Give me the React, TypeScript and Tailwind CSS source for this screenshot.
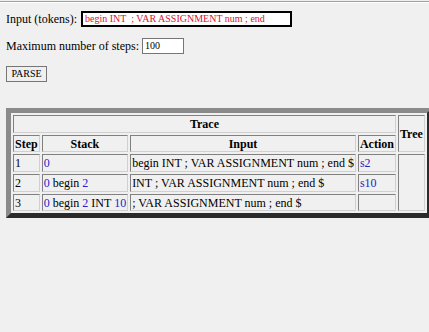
import React from "react";

const B = ({ children }: { children: React.ReactNode }) => (
  <span className="text-[#2323c8]">{children}</span>
);

export default function App() {
  const cell = "border border-[#808080] border-r-[#d0d0d0] border-b-[#d0d0d0] px-[1px] py-0 align-middle";
  const font = { fontFamily: '"Liberation Serif", "Times New Roman", serif' };
  return (
    <div
      className="w-[429px] h-[332px] bg-[#f0f0f0] text-black text-[12px] leading-[14px] overflow-hidden"
      style={font}
    >
      <div className="h-[1px] bg-[#a0a0a0] mt-[1px]" />
      <div className="h-[1px] bg-white" />
      <div className="px-[6px]">
        <div className="flex items-center mt-[8px] h-[16px]">
          <span>Input (tokens):</span>
          <div
            className="ml-[4px] w-[211px] h-[16px] border-2 border-black bg-white flex items-center px-[2px] text-[10px] text-[#e0102a] whitespace-pre"
            style={font}
          >
            begin INT  ; VAR ASSIGNMENT num ; end
          </div>
        </div>
        <div className="flex items-center mt-[11px] h-[16px]">
          <span>Maximum number of steps:</span>
          <div
            className="ml-[3px] w-[42px] h-[16px] border border-[#767676] bg-white flex items-center px-[2px] text-[10px]"
            style={font}
          >
            100
          </div>
        </div>
        <div
          className="mt-[12px] h-[16px] w-[41px] border border-[#767676] bg-[#efefef] flex items-center justify-center text-[10px]"
          style={font}
        >
          PARSE
        </div>
        <table
          className="mt-[26px] w-[418px] border-[5px] border-t-[#8a8a8a] border-l-[#8a8a8a] border-r-[#2a2a2a] border-b-[#2a2a2a] border-separate"
          style={{ borderSpacing: "2px" }}
        >
          <tbody>
            <tr className="h-[18px]">
              <th colSpan={4} className={cell + " font-bold text-center"}>Trace</th>
              <th rowSpan={2} className={cell + " font-bold text-center w-[30px]"}>Tree</th>
            </tr>
            <tr className="h-[17px]">
              <th className={cell + " font-bold text-center w-[26px]"}>Step</th>
              <th className={cell + " font-bold text-center w-[85px]"}>Stack</th>
              <th className={cell + " font-bold text-center"}>Input</th>
              <th className={cell + " font-bold text-center w-[35px]"}>Action</th>
            </tr>
            <tr className="h-[18px]">
              <td className={cell}>1</td>
              <td className={cell}><B>0</B></td>
              <td className={cell + " whitespace-nowrap"}>begin INT ; VAR ASSIGNMENT num ; end $</td>
              <td className={cell}><B>s2</B></td>
              <td rowSpan={3} className={cell}></td>
            </tr>
            <tr className="h-[18px]">
              <td className={cell}>2</td>
              <td className={cell}><B>0</B> begin <B>2</B></td>
              <td className={cell + " whitespace-nowrap"}>INT ; VAR ASSIGNMENT num ; end $</td>
              <td className={cell}><B>s10</B></td>
            </tr>
            <tr className="h-[17px]">
              <td className={cell}>3</td>
              <td className={cell + " whitespace-nowrap"}><B>0</B> begin <B>2</B> INT <B>10</B></td>
              <td className={cell + " whitespace-nowrap"}>; VAR ASSIGNMENT num ; end $</td>
              <td className={cell}></td>
            </tr>
          </tbody>
        </table>
      </div>
    </div>
  );
}
